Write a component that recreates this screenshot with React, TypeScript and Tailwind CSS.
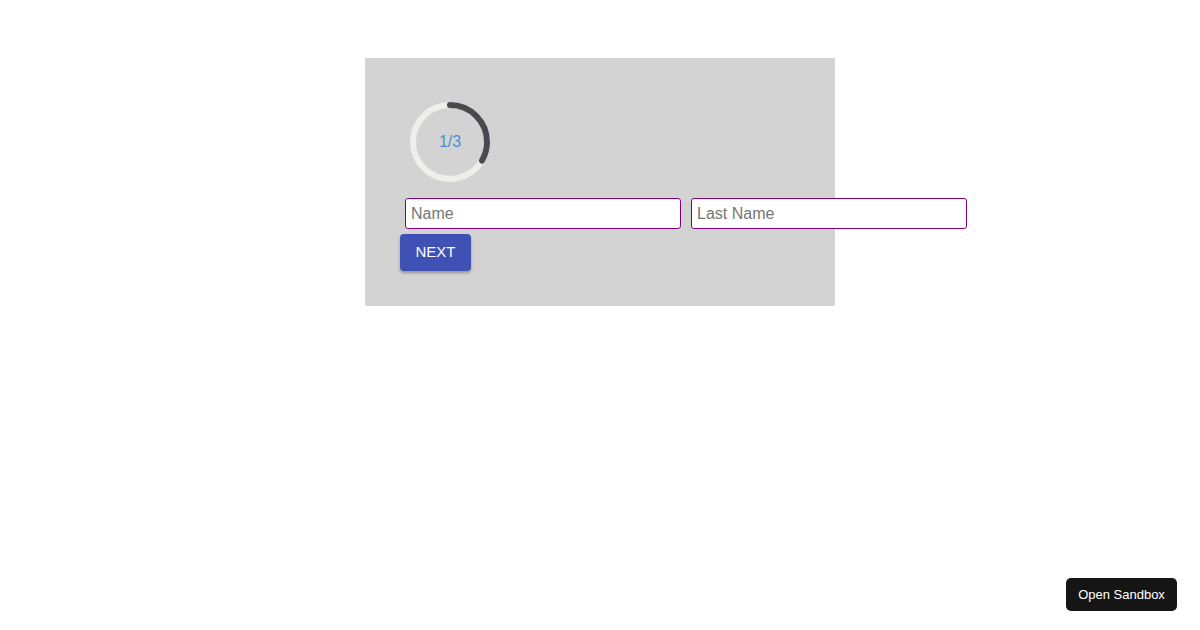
import React from "react";

export default function App() {
  const r = 37;
  const c = 2 * Math.PI * r;
  return (
    <div className="w-full min-h-[630px] bg-white" style={{ fontFamily: '"Liberation Sans", Arial, sans-serif' }}>
      <div className="pt-[58px]">
        <div className="mx-auto w-[470px] h-[248px] bg-[#d3d3d3] pl-[35px] pt-[44px] flex flex-col items-start">
          <div className="relative ml-[10px] w-[80px] h-[80px]">
            <svg width="80" height="80" viewBox="0 0 80 80" className="absolute inset-0">
              <circle cx="40" cy="40" r={r} fill="none" stroke="#efefea" strokeWidth="6" />
              <circle
                cx="40"
                cy="40"
                r={r}
                fill="none"
                stroke="#4a4a4e"
                strokeWidth="6"
                strokeLinecap="round"
                strokeDasharray={`${c / 3} ${c}`}
                transform="rotate(-90 40 40)"
              />
            </svg>
            <div className="absolute inset-0 flex items-center justify-center text-[16px] text-[#4a8fcf]">1/3</div>
          </div>
          <div className="mt-[16px] flex flex-nowrap gap-[10px] ml-[5px]">
            <input
              placeholder="Name"
              className="shrink-0 w-[276px] h-[31px] border border-[#800080] rounded-[3px] bg-white px-[5px] text-[16px] placeholder:text-[#767676] outline-none"
            />
            <input
              placeholder="Last Name"
              className="shrink-0 w-[276px] h-[31px] border border-[#800080] rounded-[3px] bg-white px-[5px] text-[16px] placeholder:text-[#767676] outline-none"
            />
          </div>
          <button className="mt-[5px] w-[71px] h-[37px] bg-[#3f51b5] text-white text-[15px] rounded-[4px] shadow-[0_2px_3px_rgba(0,0,0,0.3)]">
            NEXT
          </button>
        </div>
      </div>
      <div className="fixed right-[23px] bottom-[19px] w-[111px] h-[33px] bg-[#151515] rounded-[5px] text-white text-[13px] flex items-center justify-center">
        Open Sandbox
      </div>
    </div>
  );
}
